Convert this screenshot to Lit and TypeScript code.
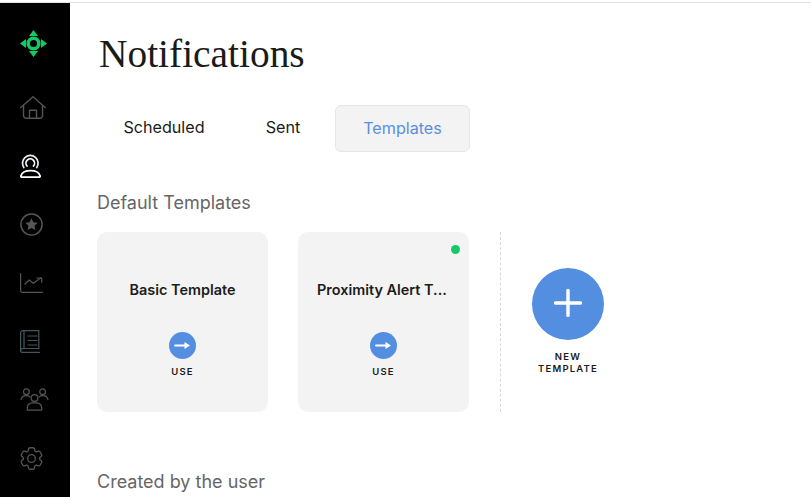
import { LitElement, html, css } from "lit";
import { customElement } from "lit/decorators.js";

const GEAR =
  "M9.594 3.94c.09-.542.56-.94 1.11-.94h2.593c.55 0 1.02.398 1.11.94l.213 1.281c.063.374.313.686.645.87.074.04.147.083.22.127.325.196.72.257 1.075.124l1.217-.456a1.125 1.125 0 0 1 1.37.49l1.296 2.247a1.125 1.125 0 0 1-.26 1.431l-1.003.827c-.293.241-.438.613-.43.992a7.723 7.723 0 0 1 0 .255c-.008.378.137.75.43.991l1.004.827c.424.35.534.955.26 1.43l-1.298 2.247a1.125 1.125 0 0 1-1.369.491l-1.217-.456c-.355-.133-.75-.072-1.076.124a6.47 6.47 0 0 1-.22.128c-.331.183-.581.495-.644.869l-.213 1.281c-.09.543-.56.94-1.11.94h-2.594c-.55 0-1.019-.398-1.11-.94l-.213-1.281c-.062-.374-.312-.686-.644-.87a6.52 6.52 0 0 1-.22-.127c-.325-.196-.72-.257-1.076-.124l-1.217.456a1.125 1.125 0 0 1-1.369-.49l-1.297-2.247a1.125 1.125 0 0 1 .26-1.431l1.004-.827c.292-.24.437-.613.43-.991a6.932 6.932 0 0 1 0-.255c.007-.38-.138-.751-.43-.992l-1.004-.827a1.125 1.125 0 0 1-.26-1.43l1.297-2.247a1.125 1.125 0 0 1 1.37-.491l1.216.456c.356.133.751.072 1.076-.124.072-.044.146-.086.22-.128.332-.183.582-.495.644-.869l.214-1.28Z";

@customElement("app-root")
export class AppRoot extends LitElement {
  static styles = css`
    :host { display: block; width: 811px; height: 497px; overflow: hidden; background: #fff; font-family: Inter, "Liberation Sans", sans-serif; }
    .frame { height: 497px; display: flex; flex-direction: column; }
    .topline { height: 3px; flex: none; box-sizing: border-box; border-bottom: 1px solid #e2e2e2; }
    .body { flex: 1; display: flex; min-height: 0; }
    .rail { width: 70px; flex: none; background: #000; display: flex; flex-direction: column; align-items: flex-start; padding: 23px 0 0 20px; box-sizing: border-box; }
    .cell { height: 58.5px; flex: none; display: flex; align-items: center; }
    .cell.logo { height: 34px; margin-bottom: 18px; }
    .rail svg { display: block; }
    main { flex: 1; padding-left: 27px; min-width: 0; }
    h1 { margin: 24px 0 0 2px; font: 400 39.4px/54px "Liberation Serif", "DejaVu Serif", serif; color: #1a1a1a; }
    .tabs { display: flex; margin-top: 24px; height: 47px; }
    .tab { font-size: 16.15px; color: #1a1a1a; display: flex; align-items: center; justify-content: center; box-sizing: border-box; padding-bottom: 4px; }
    .tab.t1 { width: 134px; }
    .tab.t2 { width: 104px; }
    .tab.active { width: 135px; background: #f3f3f3; border: 1px solid #e6e6e6; border-radius: 6px; color: #5a8fe0; padding-bottom: 2px; }
    h2 { margin: 0; font-size: 18px; font-weight: 400; color: #666; line-height: 24px; }
    h2.d { margin-top: 39px; }
    h2.c { margin-top: 58px; }
    .row { display: flex; margin-top: 17px; height: 180px; }
    .card { width: 171px; height: 180px; background: #f3f3f3; border-radius: 10px; margin-right: 30px; position: relative; display: flex; flex-direction: column; align-items: center; box-sizing: border-box; padding: 48px 19px 0; }
    .name { width: 100%; text-align: center; font-size: 14.45px; font-weight: 600; color: #1c1c1c; line-height: 20px; white-space: nowrap; }
    .name.trunc { text-align: left; }
    .use { margin-top: 32px; width: 27px; height: 27px; border-radius: 50%; background: #548ee0; display: flex; align-items: center; justify-content: center; }
    .lbl { font-size: 9.5px; font-weight: 600; letter-spacing: 1.2px; color: #1c1c1c; text-align: center; line-height: 12px; }
    .card .lbl { margin-top: 7px; }
    .dot { position: absolute; top: 13px; right: 9px; width: 9px; height: 9px; border-radius: 50%; background: #14c968; }
    .new { border-left: 1px dashed #d8d8d8; margin-left: 1px; padding-left: 31px; display: flex; flex-direction: column; align-items: center; width: 72px; }
    .plus { width: 72px; height: 72px; border-radius: 50%; background: #548ee0; margin: 36px 0 11px; display: flex; align-items: center; justify-content: center; padding-bottom: 2px; box-sizing: border-box; }
  `;

  private arrow() {
    return html`<svg width="17" height="11" viewBox="0 0 17 11"><path d="M1 5.500h10" stroke="#fff" stroke-width="1.800" stroke-linecap="round"/><path d="M10.500 2l5.500 3.500-5.500 3.500z" fill="#fff"/></svg>`;
  }

  render() {
    const grey = "#555";
    return html`
      <div class="frame">
        <div class="topline"></div>
        <div class="body">
          <nav class="rail">
            <div class="cell logo">
              <svg width="27" height="27" viewBox="0 0 27 27"><path d="M13.500 0l4.500 6h-9zM13.500 27l-4.500-6h9zM0 13.500l6-4.500v9zM27 13.500l-6 4.500v-9z" fill="#14c968"/><circle cx="13.500" cy="13.500" r="5.300" fill="none" stroke="#14c968" stroke-width="3.600"/></svg>
            </div>
            <div class="cell">
              <svg width="26" height="23" viewBox="0 0 26 23"><g fill="none" stroke="${grey}" stroke-width="1.400" stroke-linecap="round" stroke-linejoin="round"><path d="M.8 11.500 13 .8l12.200 10.700"/><path d="M3.500 9.500V19.500a2.700 2.700 0 0 0 2.700 2.700h13.600a2.700 2.700 0 0 0 2.700-2.700V9.500"/><path d="M9.500 22.200V14.200h7v8"/></g></svg>
            </div>
            <div class="cell">
              <svg width="21" height="24" viewBox="0 0 21 24"><g fill="none" stroke-width="1.700" stroke-linecap="round"><path d="M3.800 13.500a7.800 7.800 0 1 1 13 0" stroke="#e8eef8"/><path d="M7 12a4.300 4.300 0 1 1 6.500 0" stroke="#fff"/><path d="M2 23.200h17a1 1 0 0 0 1-1.500c-.8-2.700-3.500-5-9.500-5s-8.700 2.300-9.500 5a1 1 0 0 0 1 1.500z" stroke="#fff"/></g></svg>
            </div>
            <div class="cell">
              <svg width="23" height="23" viewBox="0 0 23 23"><circle cx="11.500" cy="11.500" r="10.600" fill="none" stroke="${grey}" stroke-width="1.500"/><path d="M11.500 5.300l1.900 4 4.300.5-3.200 3 .9 4.300-3.900-2.200-3.900 2.200.9-4.300-3.200-3 4.300-.5z" fill="${grey}"/></svg>
            </div>
            <div class="cell">
              <svg width="23" height="20" viewBox="0 0 23 20"><g fill="none" stroke="#555" stroke-width="1.200" stroke-linecap="round" stroke-linejoin="round"><path d="M.6.6V17.400a2 2 0 0 0 2 2H22.400"/><path d="M5 11l4.300-4 4 3.300 7.400-5.300"/><path d="M16.700 5h5v4.300"/></g></svg>
            </div>
            <div class="cell">
              <svg width="20" height="23" viewBox="0 0 20 23"><g fill="none" stroke="#46565f" stroke-width="1.200" stroke-linecap="round" stroke-linejoin="round"><path d="M3 .6H18.800V18.500H3A2.400 2.400 0 0 0 .6 20.900V3A2.400 2.400 0 0 1 3 .6z"/><path d="M.6 20.900A1.600 1.600 0 0 0 2.500 22.400H19.400"/><path d="M4 .6V18.500"/><path d="M8 6h9M8 10.500h9M8 15h9"/></g></svg>
            </div>
            <div class="cell">
              <svg width="29" height="23" viewBox="0 0 30 24"><g fill="none" stroke="${grey}" stroke-width="1.300" stroke-linecap="round" stroke-linejoin="round"><circle cx="15" cy="10.500" r="3.500"/><circle cx="6.500" cy="3.800" r="3"/><circle cx="23.500" cy="3.800" r="3"/><path d="M7.500 23v-2.500a5 5 0 0 1 5-5h5a5 5 0 0 1 5 5V23z"/><path d="M1 12c.5-2.500 2.500-4 5.500-4 1.500 0 2.800.4 3.500 1.200"/><path d="M29 12c-.5-2.500-2.500-4-5.500-4-1.500 0-2.800.4-3.500 1.200"/></g></svg>
            </div>
            <div class="cell">
              <svg width="23" height="23" viewBox="2.400 2.400 19.200 19.200"><g fill="none" stroke="${grey}" stroke-width="1.100" stroke-linejoin="round"><path d="${GEAR}"/><circle cx="12" cy="12" r="3.200"/></g></svg>
            </div>
          </nav>
          <main>
            <h1>Notifications</h1>
            <div class="tabs">
              <div class="tab t1">Scheduled</div>
              <div class="tab t2">Sent</div>
              <div class="tab active">Templates</div>
            </div>
            <h2 class="d">Default Templates</h2>
            <div class="row">
              <div class="card">
                <div class="name">Basic Template</div>
                <div class="use">${this.arrow()}</div>
                <div class="lbl">USE</div>
              </div>
              <div class="card">
                <span class="dot"></span>
                <div class="name trunc">Proximity Alert T...</div>
                <div class="use">${this.arrow()}</div>
                <div class="lbl">USE</div>
              </div>
              <div class="new">
                <div class="plus"><svg width="28" height="28" viewBox="0 0 28 28"><path d="M14 1.500v25M1.500 14h25" stroke="#fff" stroke-width="3.400" stroke-linecap="round"/></svg></div>
                <div class="lbl">NEW<br />TEMPLATE</div>
              </div>
            </div>
            <h2 class="c">Created by the user</h2>
          </main>
        </div>
      </div>
    `;
  }
}
